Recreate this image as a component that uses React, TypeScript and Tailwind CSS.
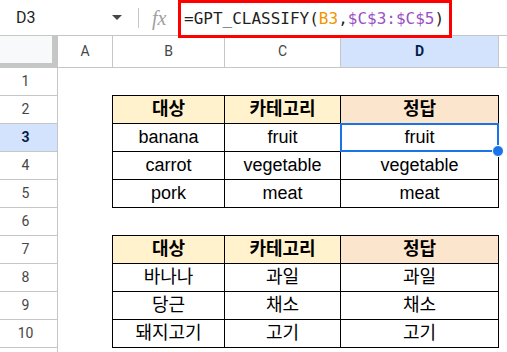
const cols = ["A", "B", "C", "D"];

const table1 = [
  ["banana", "fruit", "fruit"],
  ["carrot", "vegetable", "vegetable"],
  ["pork", "meat", "meat"],
];

const table2 = [
  ["바나나", "과일", "과일"],
  ["당근", "채소", "채소"],
  ["돼지고기", "고기", "고기"],
];

const head = ["대상", "카테고리", "정답"];

const cellFont = {
  fontFamily: '"Liberation Sans", "Noto Sans CJK KR", Arial, sans-serif',
};

function RowHeader({ n, active }: { n?: number; active?: boolean }) {
  return (
    <div
      className={
        "flex h-[28px] items-center justify-center border-r border-b border-[#c4c7c5] pr-[6px] text-[14px] " +
        (active ? "bg-[#d3e3fd] font-bold text-[#041e49]" : "bg-white text-[#444746]")
      }
    >
      {n}
    </div>
  );
}

function EmptyRow({ n }: { n?: number }) {
  return (
    <>
      <RowHeader n={n} />
      <div />
      <div />
      <div />
      <div />
      <div />
    </>
  );
}

function TableBlock({ start, rows }: { start: number; rows: string[][] }) {
  return (
    <>
      <RowHeader n={start} />
      <div />
      {head.map((h, i) => (
        <div
          key={h}
          style={cellFont}
          className={
            "-mt-px flex items-center justify-center border-t border-r border-b border-black text-[18px] font-bold text-black " +
            (i === 0 ? "-ml-px border-l " : "") +
            (i === 2 ? "bg-[#fce5cd]" : "bg-[#fff2cc]")
          }
        >
          {h}
        </div>
      ))}
      <div />
      {rows.map((r, ri) => {
        const n = start + 1 + ri;
        const active = start === 2 && ri === 0;
        return (
          <div key={n} className="contents">
            <RowHeader n={n} active={active} />
            <div />
            {r.map((v, i) => (
              <div
                key={i}
                style={cellFont}
                className={
                  "relative flex items-center justify-center border-r border-b border-black bg-white text-[18px] text-black " +
                  (i === 0 ? "-ml-px border-l " : "") +
                  (active && i === 2 ? "z-10" : "")
                }
              >
                {v}
                {active && i === 2 && (
                  <>
                    <div className="pointer-events-none absolute -top-px -left-px -right-px -bottom-px border-2 border-[#1a73e8]" />
                    <div className="absolute -right-[6px] -bottom-[6px] h-[12px] w-[12px] rounded-full border border-white bg-[#1a73e8]" />
                  </>
                )}
              </div>
            ))}
            <div />
          </div>
        );
      })}
    </>
  );
}

export default function App() {
  return (
    <div
      className="h-[352px] w-[507px] overflow-hidden bg-white"
      style={{ fontFamily: 'Roboto, "Liberation Sans", Arial, sans-serif' }}
    >
      {/* formula bar */}
      <div className="relative z-20 flex h-[36px] items-center border-b border-[#c4c7c5] bg-white">
        <div className="w-[112px] pl-[16px] text-[16px] text-[#1f1f1f]">D3</div>
        <svg width="10" height="5" viewBox="0 0 10 5" className="mb-[1px]">
          <path d="M0 0 L10 0 L5 5 Z" fill="#444746" />
        </svg>
        <div className="ml-[16px] h-[20px] w-px bg-[#c4c7c5]" />
        <div
          className="ml-[13px] text-[20px] italic text-[#a0a0a0]"
          style={{ fontFamily: '"Liberation Serif", "DejaVu Serif", serif' }}
        >
          fx
        </div>
        <div
          className="absolute top-0 left-[178px] flex h-[38px] w-[274px] items-center border-[3px] border-[#f00] bg-white pl-[3px] text-[16px] text-[#1f1f1f]"
          style={{ fontFamily: '"DejaVu Sans Mono", "Liberation Mono", monospace' }}
        >
          <span>=GPT_CLASSIFY(</span>
          <span className="text-[#f29400]">B3</span>
          <span>,</span>
          <span className="text-[#9b4fc6]">$C$3:$C$5</span>
          <span>)</span>
        </div>
      </div>

      {/* sheet grid */}
      <div className="grid grid-cols-[58px_55px_112px_116px_158px_1fr] auto-rows-[28px] grid-rows-[32px]">
        <div className="border-r-[6px] border-b-[5px] border-[#c4c7c5] bg-[#f8f9fa]" />
        {cols.map((c) => (
          <div
            key={c}
            className={
              "flex items-center justify-center border-r border-b border-[#c4c7c5] text-[14px] " +
              (c === "D" ? "bg-[#d3e3fd] font-bold text-[#041e49]" : "bg-white text-[#444746]")
            }
          >
            {c}
          </div>
        ))}
        <div className="border-b border-[#c4c7c5]" />

        <EmptyRow n={1} />
        <TableBlock start={2} rows={table1} />
        <EmptyRow n={6} />
        <TableBlock start={7} rows={table2} />
        <EmptyRow />
      </div>
    </div>
  );
}
